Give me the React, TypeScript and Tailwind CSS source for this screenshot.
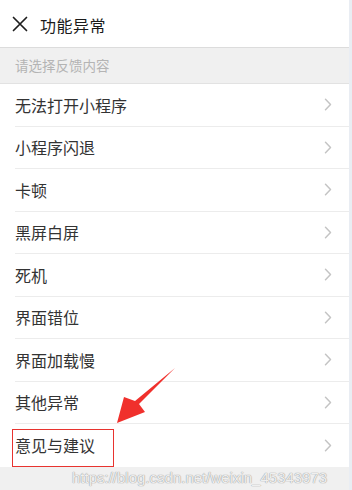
import React from "react";

const items = [
  "无法打开小程序",
  "小程序闪退",
  "卡顿",
  "黑屏白屏",
  "死机",
  "界面错位",
  "界面加载慢",
  "其他异常",
  "意见与建议",
];

function Chevron() {
  return (
    <svg width="8" height="13" viewBox="0 0 8 13" fill="none">
      <path d="M1.5 1.2 L6.5 6.5 L1.5 11.8" stroke="#c4c4c4" strokeWidth="1.5" strokeLinecap="round" strokeLinejoin="round" />
    </svg>
  );
}

export default function App() {
  return (
    <div
      className="relative w-[352px] h-[490px] overflow-hidden bg-[#f0f0f0] flex"
      style={{ fontFamily: '"Noto Sans CJK SC", "Noto Sans", sans-serif' }}
    >
      <div className="w-[349px] flex flex-col">
        {/* header */}
        <div className="h-[48px] bg-white flex items-center border-b border-[#dcdcdc]">
          <div className="w-[40px] flex justify-start pl-[12px]">
            <svg width="16" height="16" viewBox="0 0 16 16">
              <path d="M1.5 1.5 L14.5 14.5 M14.5 1.5 L1.5 14.5" stroke="#1e1e1e" strokeWidth="1.7" strokeLinecap="round" />
            </svg>
          </div>
          <span className="text-[16px] text-[#1a1a1a] tracking-[0.5px] leading-none mt-[2px]">功能异常</span>
        </div>
        {/* section label */}
        <div className="h-[36px] bg-[#f0f0f0] flex items-center pl-[15px] border-b border-[#e2e2e2]">
          <span className="text-[13.5px] text-[#b4b4b4] leading-none mt-[1px]">请选择反馈内容</span>
        </div>
        {/* list */}
        <div className="bg-white flex flex-col">
          {items.map((t, i) => (
            <div key={t} className="pl-[15px]">
              <div
                className={
                  "h-[42.5px] flex items-center justify-between pr-[17px] " +
                  (i < items.length - 1 ? "border-b border-[#ececec]" : "")
                }
              >
                <span className="text-[16px] text-[#333333] leading-none">{t}</span>
                <Chevron />
              </div>
            </div>
          ))}
        </div>
        <div className="flex-1 bg-[#f0f0f0]" />
      </div>
      <div className="w-[3px] bg-[#e9edf3]" />

      {/* annotation: red box */}
      <div className="absolute left-[12px] top-[429px] w-[102px] h-[38px] border border-[#e8332f]" />
      {/* annotation: arrow */}
      <svg className="absolute left-0 top-0" width="352" height="490" viewBox="0 0 352 490">
        <polygon
          points="175,368 139,404 145,412 117,423 124,397 135,401"
          fill="#f0302c"
        />
      </svg>
      {/* watermark */}
      <div
        className="absolute left-[72px] top-[470px] text-[15px] leading-none whitespace-nowrap text-[rgba(255,255,255,0.85)] [text-shadow:0_0_1px_#9a9a9a,0_0_1px_#9a9a9a]"
        style={{ fontFamily: '"Liberation Sans", Arial, sans-serif' }}
      >
        https://blog.csdn.net/weixin_45343973
      </div>
    </div>
  );
}
